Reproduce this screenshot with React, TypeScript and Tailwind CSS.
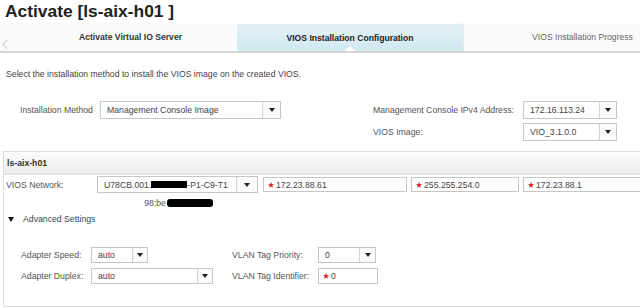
import type { ReactNode } from "react";

function Arrow() {
  return (
    <svg width="6" height="4" viewBox="0 0 6 4" aria-hidden="true">
      <path d="M0 0h6L3 4z" fill="#222" />
    </svg>
  );
}

function Req() {
  return (
    <svg width="6" height="6" viewBox="0 0 10 10" className="mr-[2px] shrink-0" aria-hidden="true">
      <path d="M5 0l1.4 3.3L10 3.6 7.3 6l.8 3.6L5 7.7 1.9 9.6 2.7 6 0 3.6l3.6-.3z" fill="#d6262e" />
    </svg>
  );
}

function Select({ className, btn, children }: { className: string; btn: string; children: ReactNode }) {
  return (
    <div className={`flex items-stretch border border-[#c6c6c6] bg-white ${className}`}>
      <div className="flex flex-1 items-center overflow-hidden whitespace-nowrap pl-[6px] text-[#444]">{children}</div>
      <div className={`flex items-center justify-center border-l border-[#d2d2d2] bg-[#fafafa] ${btn}`}>
        <Arrow />
      </div>
    </div>
  );
}

function Field({ className, children }: { className: string; children: ReactNode }) {
  return (
    <div className={`flex items-center overflow-hidden whitespace-nowrap border border-[#c6c6c6] bg-white pl-[4px] text-[#444] ${className}`}>
      <Req />
      {children}
    </div>
  );
}

export default function App() {
  return (
    <div className="h-[308px] w-[640px] overflow-hidden bg-white font-['Liberation_Sans',Arial,sans-serif] text-[8.7px] leading-[10px] text-[#555]">
      <h1 className="h-[23px] pl-[5px] text-[17.4px] font-bold leading-[23px] text-[#222]">Activate [ls-aix-h01 ]</h1>

      {/* wizard steps */}
      <div className="flex h-[30px] border-b-2 border-[#d5d5d5] bg-[#fafafa]">
        <div className="flex w-[24px] shrink-0 items-end pb-[1px] pl-[2px]">
          <svg width="6" height="11" viewBox="0 0 6 11" aria-hidden="true">
            <path d="M5 1L1 5.5 5 10" fill="none" stroke="#bdbdbd" strokeWidth="1" />
          </svg>
        </div>
        <div className="flex w-[213px] shrink-0 items-center justify-center text-[8.6px] font-bold text-[#333]">
          Activate Virtual IO Server
        </div>
        <div className="relative mt-[1px] flex w-[226px] shrink-0 items-center justify-center bg-gradient-to-b from-[#e4f2f7] to-[#d0e8f1] text-[8.6px] font-bold text-[#222]">
          VIOS Installation Configuration
          <span className="absolute bottom-0 left-1/2 h-0 w-0 -translate-x-1/2 border-x-[6px] border-b-[5px] border-x-transparent border-b-white" />
        </div>
        <div className="flex w-[238px] shrink-0 items-center justify-center border-l border-[#ececec] text-[8.6px] text-[#666]">
          VIOS Installation Progress
        </div>
      </div>

      <p className="pl-[6px] pt-[15px] leading-[12px] text-[#444]">
        Select the installation method to install the VIOS image on the created VIOS.
      </p>

      {/* installation method */}
      <div className="mt-[21px] flex">
        <div className="flex w-[373px] items-start pl-[20px]">
          <div className="flex h-[18px] w-[80px] items-center">Installation Method</div>
          <Select className="h-[18px] w-[181px]" btn="w-[18px]">Management Console Image</Select>
        </div>
        <div className="grid grid-cols-[150px_94px] gap-y-[4px]">
          <div className="flex items-center">Management Console IPv4 Address:</div>
          <Select className="h-[18px]" btn="w-[17px]">172.16.113.24</Select>
          <div className="flex items-center">VIOS Image:</div>
          <Select className="h-[18px]" btn="w-[17px]">VIO_3.1.0.0</Select>
        </div>
      </div>

      {/* partition panel */}
      <div className="ml-[3px] mt-[10px] h-[156px] w-[680px] border border-[#dcdcdc]">
        <div className="flex h-[23px] items-center border-b border-[#e2e2e2] bg-gradient-to-b from-[#fcfcfc] to-[#ececec] pl-[3px] font-bold text-[#333]">
          ls-aix-h01
        </div>

        <div className="flex items-start pl-[2px] pt-[1px]">
          <div className="flex h-[17px] w-[91px] items-center">VIOS Network:</div>
          <div className="flex w-[161px] flex-col">
            <Select className="h-[17px]" btn="w-[21px]">
              U78CB.001.
              <span className="inline-block h-[7px] w-[36px] bg-black" />
              -P1-C9-T1
            </Select>
            <div className="mt-[4px] flex h-[12px] items-center justify-center pl-[2px]">
              98:be
              <span className="ml-[1px] inline-block h-[8px] w-[46px] rounded-[3px] bg-black" />
            </div>
          </div>
          <div className="ml-[5px] mt-[1px] flex gap-[4px]">
            <Field className="h-[15px] w-[144px]">172.23.88.61</Field>
            <Field className="h-[15px] w-[108px]">255.255.254.0</Field>
            <Field className="h-[15px] w-[150px]">172.23.88.1</Field>
          </div>
        </div>

        <div className="mt-[4px] flex h-[12px] items-center pl-[4px] text-[#444]">
          <svg width="6" height="5" viewBox="0 0 6 5" className="mr-[9px]" aria-hidden="true">
            <path d="M0 0h6L3 5z" fill="#111" />
          </svg>
          Advanced Settings
        </div>

        <div className="ml-[17px] mt-[22px] grid grid-cols-[70px_141px_86px_80px] gap-y-[5px]">
          <div className="flex h-[16px] items-center">Adapter Speed:</div>
          <Select className="h-[16px] w-[57px]" btn="w-[15px]">auto</Select>
          <div className="flex items-center">VLAN Tag Priority:</div>
          <Select className="h-[16px] w-[58px]" btn="w-[16px]">0</Select>

          <div className="flex h-[16px] items-center">Adapter Duplex:</div>
          <Select className="h-[16px] w-[122px]" btn="w-[15px]">auto</Select>
          <div className="flex items-center">VLAN Tag Identifier:</div>
          <Field className="h-[16px] w-[60px]">0</Field>
        </div>
      </div>
    </div>
  );
}
